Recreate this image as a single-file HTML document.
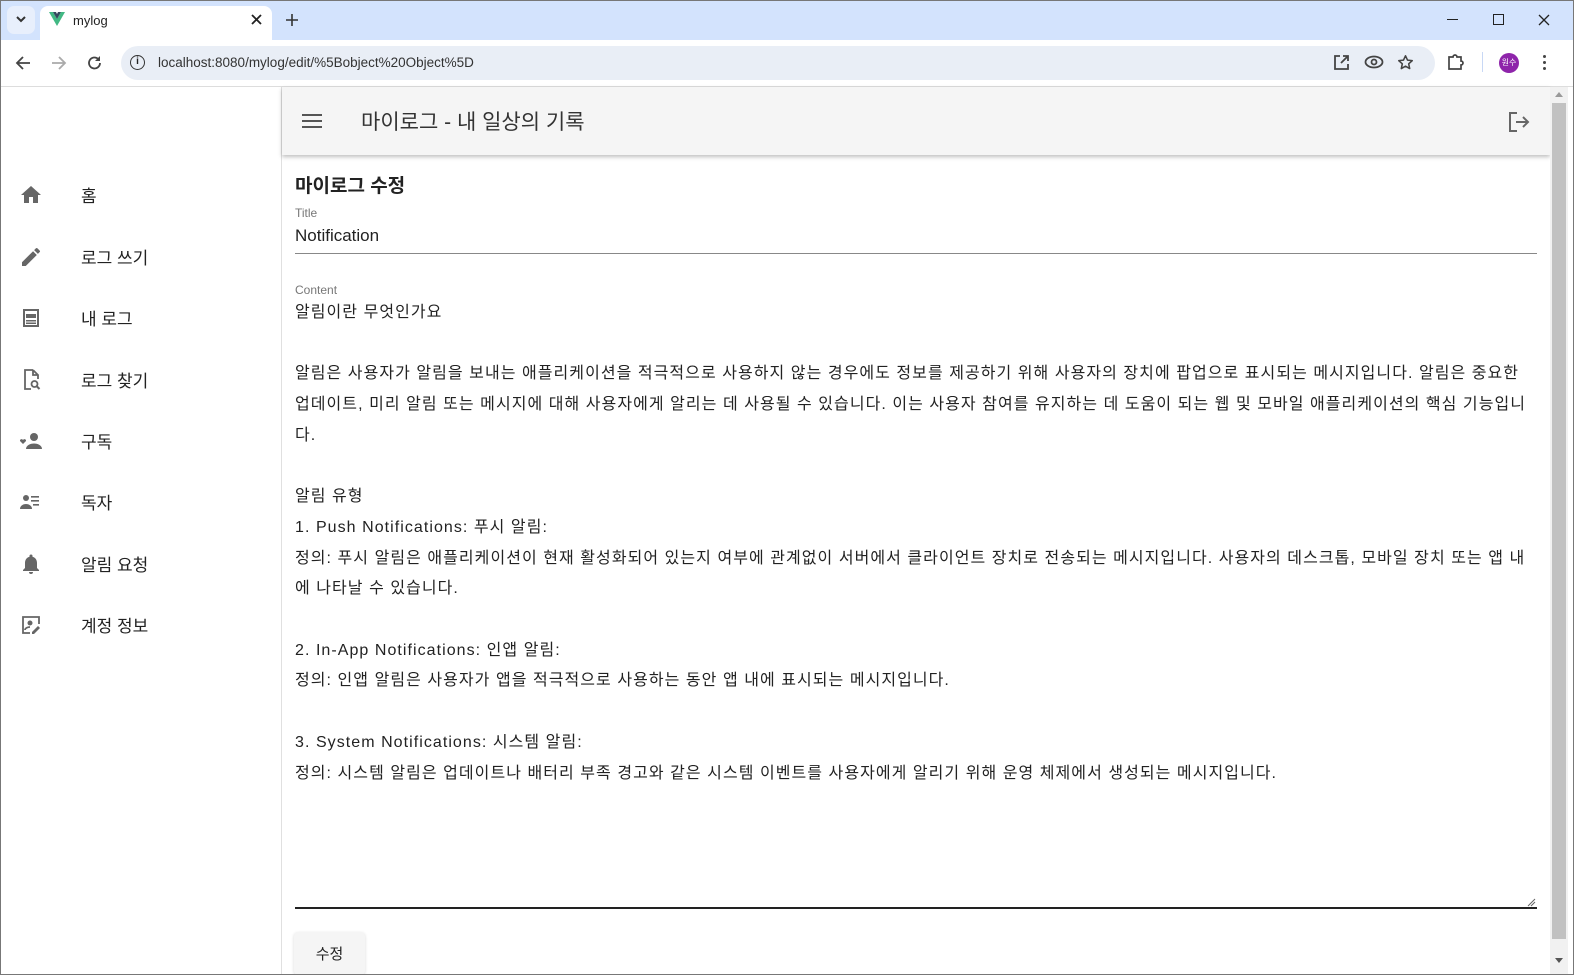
<!DOCTYPE html>
<html><head><meta charset="utf-8"><style>
*{box-sizing:border-box;margin:0;padding:0}
body{width:1574px;height:975px;overflow:hidden;background:#fff;font-family:"Liberation Sans","Noto Sans CJK KR",sans-serif;color:#222;position:relative}
.abs{position:absolute}
#tabbar{left:0;top:0;width:1574px;height:40px;background:#d3e3fd}
#tab{left:40px;top:6px;width:232px;height:34px;background:#fff;border-radius:8px 8px 0 0}
#toolbar{left:0;top:40px;width:1574px;height:47px;background:#fff;border-bottom:1px solid #ddd}
#omni{left:121px;top:46px;width:1314px;height:34px;background:#e9eef6;border-radius:17px}
#side{left:0;top:87px;width:282px;height:888px;background:#fff;border-right:1px solid #e0e0e0}
.item{position:absolute;left:0;width:281px;height:40px}
.item svg{position:absolute;left:19px;top:8px}
.item span{position:absolute;left:81px;top:7px;font-size:17px;color:#222}
#appbar{left:282px;top:87px;width:1268px;height:68px;background:#f5f5f5;box-shadow:0 2px 4px rgba(0,0,0,.25)}
#scroll{left:1550px;top:87px;width:18px;height:888px;background:#f1f1f1}
.txt{white-space:pre;font-size:16px;line-height:30.7px;color:#222;letter-spacing:1.05px}
</style></head><body>
<div id="tabbar" class="abs"></div>
<div class="abs" style="left:7px;top:6px;width:28px;height:28px;background:#e8effc;border-radius:7px"></div>
<svg class="abs" style="left:14px;top:14px" width="14" height="10"><path d="M3 3l4 4 4-4" stroke="#333" stroke-width="2" fill="none"/></svg>
<div id="tab" class="abs"></div>
<svg class="abs" style="left:49px;top:12px" width="16" height="14"><path d="M0 0h4l4 7 4-7h4L8 14z" fill="#41b883"/><path d="M4 0h3l1 2 1-2h3L8 7z" fill="#35495e"/></svg>
<div class="abs" style="left:73px;top:13px;font-size:13px;color:#222">mylog</div>
<svg class="abs" style="left:251px;top:14px" width="11" height="11"><path d="M1 1l9 9M10 1l-9 9" stroke="#222" stroke-width="1.8"/></svg>
<svg class="abs" style="left:286px;top:14px" width="12" height="12"><path d="M6 0v12M0 6h12" stroke="#333" stroke-width="1.6"/></svg>
<div class="abs" style="left:1447px;top:19px;width:11px;height:1px;background:#222"></div>
<div class="abs" style="left:1493px;top:14px;width:11px;height:11px;border:1px solid #222"></div>
<svg class="abs" style="left:1538px;top:14px" width="12" height="12"><path d="M1 1l10 10M11 1L1 11" stroke="#222" stroke-width="1.3"/></svg>
<div id="toolbar" class="abs"></div>
<svg class="abs" style="left:15px;top:55px" width="16" height="16"><path d="M15 8H2M8 2L2 8l6 6" stroke="#444" stroke-width="1.8" fill="none"/></svg>
<svg class="abs" style="left:51px;top:55px" width="16" height="16"><path d="M1 8h13M8 2l6 6-6 6" stroke="#aaa" stroke-width="1.8" fill="none"/></svg>
<svg class="abs" style="left:87px;top:55px" width="16" height="16"><path d="M13 8a5.5 5.5 0 11-1.6-3.9" stroke="#444" stroke-width="1.8" fill="none"/><path d="M13 1v5H8z" fill="#444"/></svg>
<div id="omni" class="abs"></div>
<div class="abs" style="left:130px;top:55px;width:15px;height:15px;border:1.5px solid #333;border-radius:50%;font-size:10px;text-align:center;line-height:12px;font-weight:bold">i</div>
<div class="abs" style="left:158px;top:55px;font-size:13.5px;color:#333">localhost:8080/mylog/edit/%5Bobject%20Object%5D</div>
<svg class="abs" style="left:1333px;top:54px" width="17" height="17"><path d="M7 2H2v13h13v-5M10 2h5v5M15 2L8 9" stroke="#444" stroke-width="1.8" fill="none"/></svg>
<svg class="abs" style="left:1364px;top:55px" width="20" height="14"><ellipse cx="10" cy="7" rx="8.5" ry="5.5" stroke="#444" stroke-width="1.8" fill="none"/><circle cx="10" cy="7" r="2.5" stroke="#444" stroke-width="1.8" fill="none"/></svg>
<svg class="abs" style="left:1397px;top:54px" width="17" height="17" viewBox="0 0 24 24"><path d="M12 2.5l2.9 6.2 6.6.7-5 4.5 1.4 6.6L12 17.2l-5.9 3.3 1.4-6.6-5-4.5 6.6-.7z" stroke="#444" stroke-width="2.2" fill="none" stroke-linejoin="round"/></svg>
<svg class="abs" style="left:1447px;top:53px" width="18" height="18"><path d="M2 4h4a2 2 0 014 0h4v4a2 2 0 010 4v4H2z" stroke="#444" stroke-width="1.7" fill="none"/></svg>
<div class="abs" style="left:1482px;top:52px;width:1px;height:20px;background:#c8d8f5"></div>
<div class="abs" style="left:1499px;top:53px;width:20px;height:20px;border-radius:50%;background:#8e24aa;color:#fff;font-size:8px;text-align:center;line-height:20px">원수</div>
<div class="abs" style="left:1543px;top:55px;width:3px;height:3px;background:#444;border-radius:50%;box-shadow:0 6px 0 #444,0 12px 0 #444"></div>

<div id="side" class="abs">
<div class="item" style="top:88px"><svg width="24" height="24" viewBox="0 0 24 24"><path d="M10 20v-6h4v6h5v-8h3L12 3 2 12h3v8z" fill="#666"/></svg><span>홈</span></div>
<div class="item" style="top:150px"><svg width="24" height="24" viewBox="0 0 24 24"><path d="M3 17.25V21h3.75L17.81 9.94l-3.75-3.75zM20.71 7.04a1 1 0 000-1.41l-2.34-2.34a1 1 0 00-1.41 0l-1.83 1.83 3.75 3.75z" fill="#666"/></svg><span>로그 쓰기</span></div>
<div class="item" style="top:211px"><svg width="24" height="24" viewBox="0 0 24 24"><path d="M4 3h16v18H4z M6 5v14h12V5z M7 8h10v4H7z M7 14h10v1.5H7z M7 16.5h10V18H7z" fill="#666" fill-rule="evenodd"/></svg><span>내 로그</span></div>
<div class="item" style="top:273px"><svg width="24" height="24" viewBox="0 0 24 24"><path d="M14 2H6v19h6M14 2l5 5v4M14 2v5h5" stroke="#666" stroke-width="1.8" fill="none"/><circle cx="15.5" cy="16" r="3" stroke="#666" stroke-width="1.8" fill="none"/><path d="M17.5 18l3 3" stroke="#666" stroke-width="2"/></svg><span>로그 찾기</span></div>
<div class="item" style="top:334px"><svg width="26" height="24" viewBox="0 0 26 24"><circle cx="15" cy="8" r="4" fill="#666"/><path d="M7 20c0-4 5-5.5 8-5.5s8 1.5 8 5.5z" fill="#666"/><path d="M4 15l-3-3a1.6 1.6 0 013-1 1.6 1.6 0 013 1z" fill="#666"/></svg><span>구독</span></div>
<div class="item" style="top:395px"><svg width="24" height="24" viewBox="0 0 24 24"><circle cx="7" cy="8" r="3" fill="#666"/><path d="M1 19c0-3.5 3.5-5 6-5s6 1.5 6 5z" fill="#666"/><path d="M12 6h8v1.6h-8zM12 10h8v1.6h-8zM14 14h6v1.6h-6z" fill="#666"/></svg><span>독자</span></div>
<div class="item" style="top:457px"><svg width="24" height="24" viewBox="0 0 24 24"><path d="M12 22a2 2 0 002-2h-4a2 2 0 002 2zm6-6v-5c0-3.1-1.6-5.6-4.5-6.3V4a1.5 1.5 0 00-3 0v.7C7.6 5.4 6 7.9 6 11v5l-2 2v1h16v-1z" fill="#666"/></svg><span>알림 요청</span></div>
<div class="item" style="top:518px"><svg width="24" height="24" viewBox="0 0 24 24"><path d="M11 20H4V4h16v7" stroke="#666" stroke-width="1.8" fill="none"/><circle cx="11" cy="10" r="2.5" fill="#666"/><path d="M6 17c0-2 3-3 5-3" stroke="#666" stroke-width="1.8" fill="none"/><path d="M13 21v-2l6-6 2 2-6 6z" fill="#666"/></svg><span>계정 정보</span></div>
</div>

<div id="appbar" class="abs"></div>
<svg class="abs" style="left:301px;top:112px" width="22" height="18"><path d="M1 3h20M1 9h20M1 15h20" stroke="#555" stroke-width="2"/></svg>
<div class="abs" style="left:361px;top:106px;font-size:21px;color:#333">마이로그 - 내 일상의 기록</div>
<svg class="abs" style="left:1507px;top:110px" width="24" height="24" viewBox="0 0 24 24"><path d="M10 3H3v18h7" stroke="#666" stroke-width="2" fill="none"/><path d="M9 12h12M16 7l5 5-5 5" stroke="#666" stroke-width="2" fill="none"/></svg>

<div class="abs" style="left:295px;top:171px;font-size:19px;font-weight:bold;color:#222">마이로그 수정</div>
<div class="abs" style="left:295px;top:206px;font-size:12px;color:#777">Title</div>
<div class="abs" style="left:295px;top:226px;font-size:17px;color:#222">Notification</div>
<div class="abs" style="left:295px;top:253px;width:1242px;height:1px;background:#888"></div>
<div class="abs" style="left:295px;top:283px;font-size:12px;color:#777">Content</div>
<div class="abs txt" style="left:295px;top:298px">알림이란 무엇인가요

알림은 사용자가 알림을 보내는 애플리케이션을 적극적으로 사용하지 않는 경우에도 정보를 제공하기 위해 사용자의 장치에 팝업으로 표시되는 메시지입니다. 알림은 중요한
업데이트, 미리 알림 또는 메시지에 대해 사용자에게 알리는 데 사용될 수 있습니다. 이는 사용자 참여를 유지하는 데 도움이 되는 웹 및 모바일 애플리케이션의 핵심 기능입니
다.

알림 유형
1. Push Notifications: 푸시 알림:
정의: 푸시 알림은 애플리케이션이 현재 활성화되어 있는지 여부에 관계없이 서버에서 클라이언트 장치로 전송되는 메시지입니다. 사용자의 데스크톱, 모바일 장치 또는 앱 내
에 나타날 수 있습니다.

2. In-App Notifications: 인앱 알림:
정의: 인앱 알림은 사용자가 앱을 적극적으로 사용하는 동안 앱 내에 표시되는 메시지입니다.

3. System Notifications: 시스템 알림:
정의: 시스템 알림은 업데이트나 배터리 부족 경고와 같은 시스템 이벤트를 사용자에게 알리기 위해 운영 체제에서 생성되는 메시지입니다.</div>
<div class="abs" style="left:295px;top:907px;width:1242px;height:2px;background:#222"></div>
<svg class="abs" style="left:1527px;top:898px" width="9" height="9"><path d="M1 8L8 1M4 8L8 4" stroke="#666" stroke-width="1"/></svg>
<div class="abs" style="left:294px;top:932px;width:71px;height:43px;background:#f5f5f5;border-radius:4px;box-shadow:0 1px 3px rgba(0,0,0,.15);font-size:15px;text-align:center;padding-top:11px;color:#222">수정</div>

<div id="scroll" class="abs"></div>
<div class="abs" style="left:1552px;top:103px;width:14px;height:836px;background:#c1c1c1"></div>
<div class="abs" style="left:1555px;top:92px;width:0;height:0;border:4px solid transparent;border-bottom:5px solid #999;border-top:0"></div>
<div class="abs" style="left:1555px;top:958px;width:0;height:0;border:4px solid transparent;border-top:5px solid #555;border-bottom:0"></div>
<div class="abs" style="left:0;top:0;width:1574px;height:975px;border:1px solid #777;pointer-events:none"></div>
</body></html>
